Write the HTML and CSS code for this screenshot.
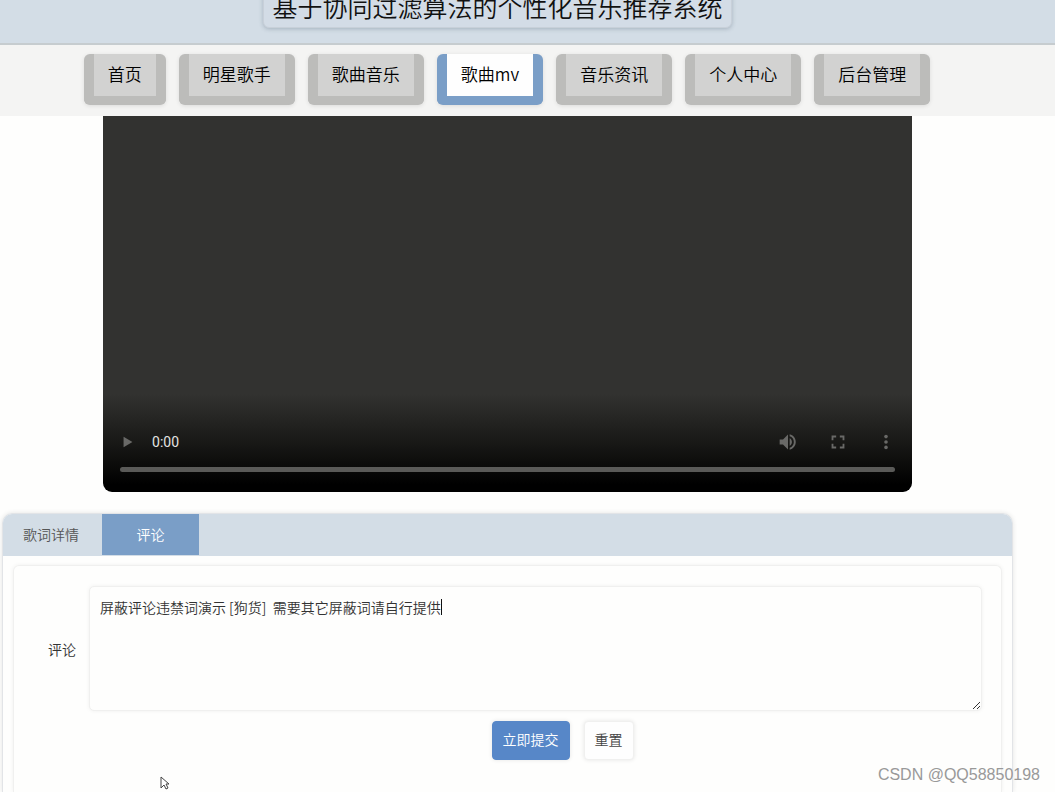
FILE: index.html
```html
<!DOCTYPE html>
<html lang="zh-CN">
<head>
    <meta charset="UTF-8">
    <meta name="viewport" content="width=device-width, initial-scale=1.0">
    <title>基于协同过滤算法的个性化音乐推荐系统</title>
    <link rel="stylesheet" href="styles.css">
</head>
<body>
    <header class="top">
        <h1 class="title">基于协同过滤算法的个性化音乐推荐系统</h1>
    </header>

    <nav class="menu">
        <a href="#">首页</a>
        <a href="#">明星歌手</a>
        <a href="#">歌曲音乐</a>
        <a href="#" class="active">歌曲mv</a>
        <a href="#">音乐资讯</a>
        <a href="#">个人中心</a>
        <a href="#">后台管理</a>
    </nav>

    <main class="content">
        <section class="player">
            <div class="controls">
                <button type="button" class="icon-btn" aria-label="播放">
                    <svg width="20" height="20" viewBox="0 0 18 18"><path d="M4 3v12l10-6z"/></svg>
                </button>
                <span class="time">0:00</span>
                <button type="button" class="icon-btn" aria-label="音量">
                    <svg width="20" height="20" viewBox="0 0 24 24"><path d="M2 9v6h4l6 6V3L6 9H2zm12-1.500v9c1.600-.7 2.700-2.500 2.700-4.500S15.600 8.200 14 7.500zM14 2.800v2.400c3 .8 5 3.500 5 6.800s-2 6-5 6.800v2.400c4.300-1 7.300-4.700 7.300-9.200S18.300 3.800 14 2.800z"/></svg>
                </button>
                <button type="button" class="icon-btn" aria-label="全屏">
                    <svg width="22" height="22" viewBox="0 0 24 24"><path d="M5 10V5h5v2H7v3H5zm9-5h5v5h-2V7h-3V5zM5 14h2v3h3v2H5v-5zm12 0h2v5h-5v-2h3v-3z"/></svg>
                </button>
                <button type="button" class="icon-btn" aria-label="更多">
                    <svg width="18" height="18" viewBox="0 0 20 20"><circle cx="10" cy="4" r="2"/><circle cx="10" cy="10" r="2"/><circle cx="10" cy="16" r="2"/></svg>
                </button>
            </div>
            <div class="progress"></div>
        </section>

        <section class="panel">
            <div class="tabs">
                <button type="button" class="tab">歌词详情</button>
                <button type="button" class="tab active">评论</button>
            </div>
            <form class="comment-form">
                <div class="row">
                    <label for="comment">评论</label>
                    <div class="field">
                        <textarea id="comment" name="comment">屏蔽评论违禁词演示 [狗货]  需要其它屏蔽词请自行提供</textarea>
                        <span class="caret"></span>
                        <svg class="grip" width="9" height="9" viewBox="0 0 9 9"><path d="M1 8l7-7M5 8l3-3"/></svg>
                    </div>
                </div>
                <div class="actions">
                    <button type="submit" class="btn primary">立即提交</button>
                    <button type="reset" class="btn">重置</button>
                </div>
            </form>
        </section>
    </main>

    <svg class="pointer" width="10" height="15" viewBox="0 0 10 15"><path d="M1 1v11l3-3 2 4 2-1-2-4h3z"/></svg>
    <div class="watermark">CSDN @QQ58850198</div>
</body>
</html>
```

FILE: styles.css
```css
* {
    box-sizing: border-box;
}
body {
    margin: 0;
    height: 100vh;
    display: flex;
    flex-direction: column;
    position: relative;
    overflow: hidden;
    background-color: #fefefd;
    color: #111;
    font-family: "Noto Sans CJK SC", sans-serif;
    font-size: 14px;
    font-weight: 350;
}
button, textarea {
    font-family: inherit;
    font-size: inherit;
    font-weight: inherit;
}
.top {
    flex: none;
    display: flex;
    justify-content: center;
    align-items: flex-end;
    height: 45px;
    padding: 0 60px 15px 0;
    background-color: #d3dde6;
    border-bottom: 2px solid #c6cccf;
    box-shadow: 0 1px 5px rgba(0, 0, 0, 0.12);
}
.title {
    margin: 0;
    padding: 0 8px 3px;
    font-size: 25px;
    line-height: 36px;
    font-weight: inherit;
    border: 1px solid #c8d0d9;
    border-radius: 6px;
    background-color: #d3dce6;
    box-shadow: 0 1px 4px rgba(60, 80, 100, 0.3);
}
.menu {
    flex: none;
    display: flex;
    justify-content: center;
    gap: 13px;
    padding: 9px 41px 11px 0;
    background-color: #f4f4f3;
}
.menu a {
    height: 51px;
    padding: 0 14px;
    border: 10px solid #bcbcba;
    border-top: 0;
    border-bottom-width: 9px;
    border-radius: 6px;
    background-color: #d2d2d1;
    box-shadow: 0 1px 4px rgba(0, 0, 0, 0.1);
    color: #000;
    font-size: 17px;
    line-height: 40px;
    text-decoration: none;
}
.menu a.active {
    border-color: #7a9ec7;
    background-color: #fefefe;
}
.content {
    flex: 1;
    display: flex;
    flex-direction: column;
    margin: 0 42px 0 2px;
}
.player {
    width: 80%;
    height: 376px;
    margin: 0 auto 21px;
    padding: 0 17px 20px;
    display: flex;
    flex-direction: column;
    justify-content: flex-end;
    border-radius: 0 0 9px 9px;
    background: linear-gradient(#323230, #323230 74%, #181816 87%, #000 98%);
}
.controls {
    display: flex;
    align-items: center;
    gap: 20px;
    height: 30px;
    margin-bottom: 10px;
}
.icon-btn {
    display: flex;
    align-items: center;
    justify-content: center;
    width: 30px;
    height: 30px;
    padding: 0;
    border: 0;
    background: none;
    fill: #696967;
}
.icon-btn:first-child {
    width: 16px;
}
.icon-btn:last-child {
    width: 26px;
    margin-right: -4px;
}
.time {
    flex: 1;
    margin-left: -4px;
    color: #e4e4e2;
    font-family: Roboto, sans-serif;
    font-weight: 400;
}
.progress {
    height: 5px;
    border-radius: 3px;
    background-color: #5a5a58;
}
.panel {
    flex: 1;
    display: flex;
    flex-direction: column;
    border: 1px solid #e2e4e7;
    border-bottom: 0;
    border-radius: 10px 10px 0 0;
    box-shadow: 0 0 5px rgba(0, 0, 0, 0.1);
}
.tabs {
    display: flex;
    height: 42px;
    padding-bottom: 1px;
    border-radius: 9px 9px 0 0;
    background-color: #d3dde6;
}
.tab {
    padding: 0 20px 2px;
    border: 0;
    background: none;
    color: #555;
    line-height: 38px;
}
.tab.active {
    width: 97px;
    margin-left: 3px;
    background-color: #7a9ec7;
    color: #fff;
}
.comment-form {
    flex: 1;
    margin: 9px 10px 0;
    padding: 20px 19px 0;
    border: 1px solid #f0f0ef;
    border-bottom: 0;
    border-radius: 6px 6px 0 0;
    box-shadow: 0 0 4px rgba(0, 0, 0, 0.06);
}
.row {
    display: flex;
    align-items: center;
}
.row label {
    width: 56px;
    padding-right: 13px;
    text-align: right;
    color: #333;
}
.field {
    flex: 1;
    position: relative;
}
textarea {
    display: block;
    width: 100%;
    height: 125px;
    padding: 10px;
    border: 1px solid #f0f0ef;
    border-radius: 5px;
    outline: 0;
    resize: none;
    background-color: #fefefd;
    box-shadow: 0 0 4px rgba(0, 0, 0, 0.06);
    color: #333;
    line-height: 20px;
}
.caret {
    position: absolute;
    left: 352px;
    top: 13px;
    width: 1px;
    height: 16px;
    background-color: #111;
}
.grip {
    position: absolute;
    right: 1px;
    bottom: 1px;
    fill: none;
    stroke: #333;
}
.actions {
    display: flex;
    justify-content: center;
    gap: 14px;
    margin: 10px 0 0 110px;
}
.btn {
    height: 39px;
    padding: 0 10px 4px;
    border: 1px solid #f0f0ef;
    border-radius: 4px;
    background-color: #fefefe;
    box-shadow: 0 0 4px rgba(0, 0, 0, 0.1);
    color: #444;
}
.btn.primary {
    border-color: #5787c8;
    background-color: #5787c8;
    color: #fff;
}
.pointer {
    position: absolute;
    left: 160px;
    top: 776px;
    fill: #fff;
    stroke: #444;
}
.watermark {
    position: absolute;
    right: 15px;
    bottom: 7px;
    color: #999;
    font-family: "Liberation Sans", sans-serif;
    font-size: 16px;
    line-height: 20px;
    font-weight: 400;
}
```
